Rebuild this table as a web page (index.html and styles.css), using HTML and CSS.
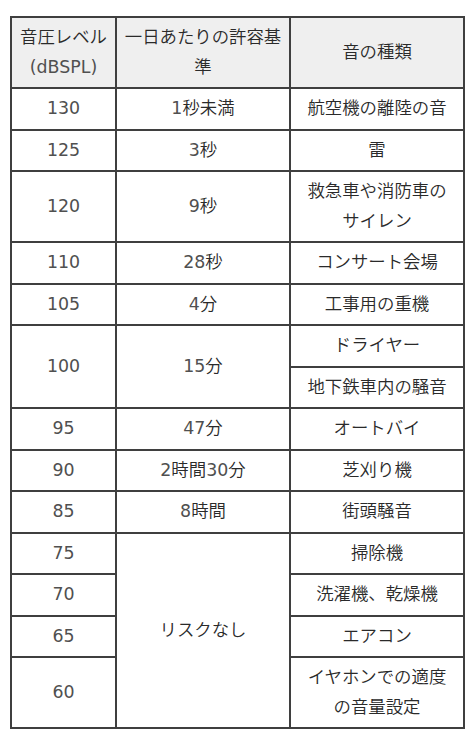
FILE: index.html
```html
<!DOCTYPE html>
<html lang="ja">
<head>
<meta charset="utf-8">
<title>音圧レベルと許容基準</title>
<link rel="stylesheet" href="styles.css">
</head>
<body>
<main class="page">
  <table class="noise-table">
    <colgroup>
      <col class="col-level">
      <col class="col-time">
      <col class="col-kind">
    </colgroup>
    <thead>
      <tr>
        <th>音圧レベル<br><span class="lat">(dBSPL)</span></th>
        <th>一日あたりの許容基<br>準</th>
        <th>音の種類</th>
      </tr>
    </thead>
    <tbody>
      <tr><td><span class="lat">130</span></td><td><span class="lat">1</span>秒未満</td><td>航空機の離陸の音</td></tr>
      <tr><td><span class="lat">125</span></td><td><span class="lat">3</span>秒</td><td>雷</td></tr>
      <tr><td><span class="lat">120</span></td><td><span class="lat">9</span>秒</td><td>救急車や消防車の<br>サイレン</td></tr>
      <tr><td><span class="lat">110</span></td><td><span class="lat">28</span>秒</td><td>コンサート会場</td></tr>
      <tr><td><span class="lat">105</span></td><td><span class="lat">4</span>分</td><td>工事用の重機</td></tr>
      <tr><td rowspan="2"><span class="lat">100</span></td><td rowspan="2"><span class="lat">15</span>分</td><td>ドライヤー</td></tr>
      <tr><td>地下鉄車内の騒音</td></tr>
      <tr><td><span class="lat">95</span></td><td><span class="lat">47</span>分</td><td>オートバイ</td></tr>
      <tr><td><span class="lat">90</span></td><td><span class="lat">2</span>時間<span class="lat">30</span>分</td><td>芝刈り機</td></tr>
      <tr><td><span class="lat">85</span></td><td><span class="lat">8</span>時間</td><td>街頭騒音</td></tr>
      <tr><td><span class="lat">75</span></td><td rowspan="4">リスクなし</td><td>掃除機</td></tr>
      <tr><td><span class="lat">70</span></td><td>洗濯機、乾燥機</td></tr>
      <tr><td><span class="lat">65</span></td><td>エアコン</td></tr>
      <tr><td><span class="lat">60</span></td><td>イヤホンでの適度<br>の音量設定</td></tr>
    </tbody>
  </table>
</main>
</body>
</html>
```
FILE: styles.css
```css
html, body {
  margin: 0;
  padding: 0;
  background: #ffffff;
}

.page {
  padding: 16px 0 0 10px;
}

.noise-table {
  border-collapse: collapse;
  table-layout: fixed;
  width: 453px;
  font-family: "DejaVu Sans", "Noto Sans CJK JP", sans-serif;
  font-size: 17.4px;
  line-height: 29.5px;
  color: #2a2a2a;
}

.col-level { width: 105px; }
.col-time { width: 174px; }
.col-kind { width: 174px; }

.noise-table th,
.noise-table td {
  border: 2px solid #3f3f3f;
  padding: 5px 6px;
  text-align: center;
  vertical-align: middle;
  white-space: nowrap;
  font-weight: 350;
}

.noise-table th {
  background: #efefef;
}

.lat {
  font-weight: 400;
  color: #505050;
}
```
